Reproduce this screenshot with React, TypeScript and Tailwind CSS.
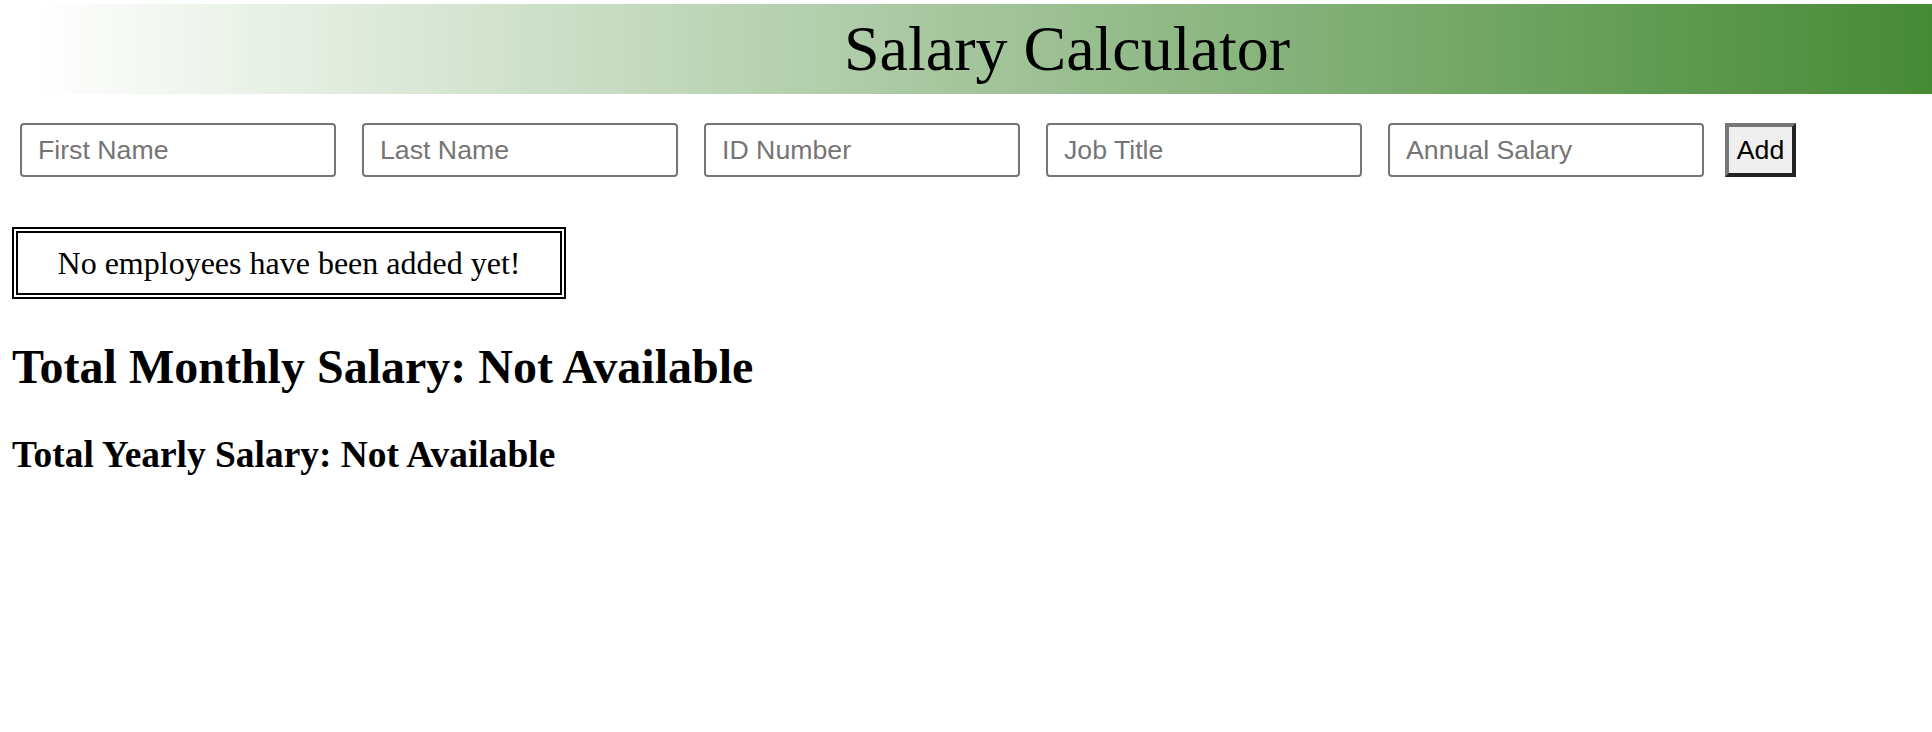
import React from "react";

const fields = ["First Name", "Last Name", "ID Number", "Job Title", "Annual Salary"];

const App = () => {
  return (
    <div className="min-h-[732px] bg-white pt-[4px] text-black [font-family:'Liberation_Serif','Times_New_Roman',serif]">
      {/* HEADER */}
      <header className="ml-[32px] flex h-[90px] items-center justify-center bg-[linear-gradient(to_right,#ffffff,#468a35)] pl-[170px]">
        <h1 className="text-[64px] font-normal leading-[64px]">Salary Calculator</h1>
      </header>

      {/* FORM */}
      <form className="mt-[29px] flex items-center pl-[20px] [font-family:'Liberation_Sans',Arial,sans-serif]">
        <div className="flex gap-[26px]">
          {fields.map((field) => (
            <input
              key={field}
              type="text"
              placeholder={field}
              className="h-[54px] w-[316px] rounded-[4px] border-2 border-[#767676] bg-white px-[16px] text-[26.7px] text-black outline-none placeholder:text-[#757575]"
            />
          ))}
        </div>
        <button
          type="button"
          className="ml-[21px] h-[54px] w-[71px] border-4 border-t-[#777777] border-l-[#777777] border-r-[#222222] border-b-[#222222] bg-[#efefef] text-[26.7px] leading-none text-black"
        >
          Add
        </button>
      </form>

      {/* EMPLOYEE LIST */}
      <div className="ml-[12px] mt-[50px] flex h-[72px] w-[554px] items-center justify-center border-[6px] border-double border-black">
        <p className="text-[32px] leading-[36px]">No employees have been added yet!</p>
      </div>

      {/* TOTALS */}
      <h2 className="ml-[12px] mt-[40px] text-[48px] font-bold leading-[56px]">
        Total Monthly Salary: Not Available
      </h2>
      <h3 className="ml-[12px] mt-[38px] text-[37.44px] font-bold leading-[44px]">
        Total Yearly Salary: Not Available
      </h3>
    </div>
  );
};

export default App;
